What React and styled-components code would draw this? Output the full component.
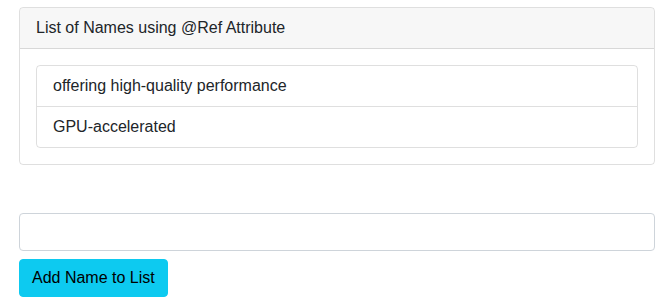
import { useRef, useState } from 'react';
import styled, { createGlobalStyle } from 'styled-components';

const GlobalStyle = createGlobalStyle`
  body {
    margin: 0;
    background: #fff;
    font-family: "Liberation Sans", Arial, sans-serif;
    font-size: 16px;
    line-height: 24px;
    color: #212529;
  }
  * {
    box-sizing: border-box;
  }
`;

const Page = styled.div`
  display: flex;
  flex-direction: column;
  align-items: flex-start;
  padding: 7px 11px 0 19px;
`;

const Card = styled.section`
  width: 100%;
  border: 1px solid rgba(0, 0, 0, 0.125);
  border-radius: 4px;
  margin-bottom: 48px;
`;

const CardHeader = styled.div`
  padding: 8px 16px;
  background: rgba(0, 0, 0, 0.03);
  border-bottom: 1px solid rgba(0, 0, 0, 0.125);
  border-radius: 4px 4px 0 0;
`;

const CardBody = styled.div`
  padding: 16px;
`;

const ListGroup = styled.ul`
  margin: 0;
  padding: 0;
  list-style: none;
  border: 1px solid rgba(0, 0, 0, 0.125);
  border-radius: 4px;
`;

const ListItem = styled.li`
  padding: 8px 16px;
  & + & {
    border-top: 1px solid rgba(0, 0, 0, 0.125);
  }
`;

const NameInput = styled.input`
  width: 100%;
  height: 38px;
  padding: 6px 12px;
  font: inherit;
  color: #212529;
  border: 1px solid #ced4da;
  border-radius: 4px;
  margin-bottom: 8px;
  outline: none;
`;

const AddButton = styled.button`
  height: 38px;
  padding: 6px 12px;
  font: inherit;
  color: #000;
  background: #0dcaf0;
  border: 1px solid #0dcaf0;
  border-radius: 4px;
  cursor: pointer;
`;

export default function App() {
  const [names, setNames] = useState([
    'offering high-quality performance',
    'GPU-accelerated',
  ]);
  const inputRef = useRef(null);

  const addName = () => {
    const value = inputRef.current?.value.trim();
    if (!value) return;
    setNames((prev) => [...prev, value]);
    inputRef.current.value = '';
  };

  return (
    <>
      <GlobalStyle />
      <Page>
        <Card>
          <CardHeader>List of Names using @Ref Attribute</CardHeader>
          <CardBody>
            <ListGroup>
              {names.map((name) => (
                <ListItem key={name}>{name}</ListItem>
              ))}
            </ListGroup>
          </CardBody>
        </Card>
        <NameInput ref={inputRef} type="text" />
        <AddButton type="button" onClick={addName}>
          Add Name to List
        </AddButton>
      </Page>
    </>
  );
}
